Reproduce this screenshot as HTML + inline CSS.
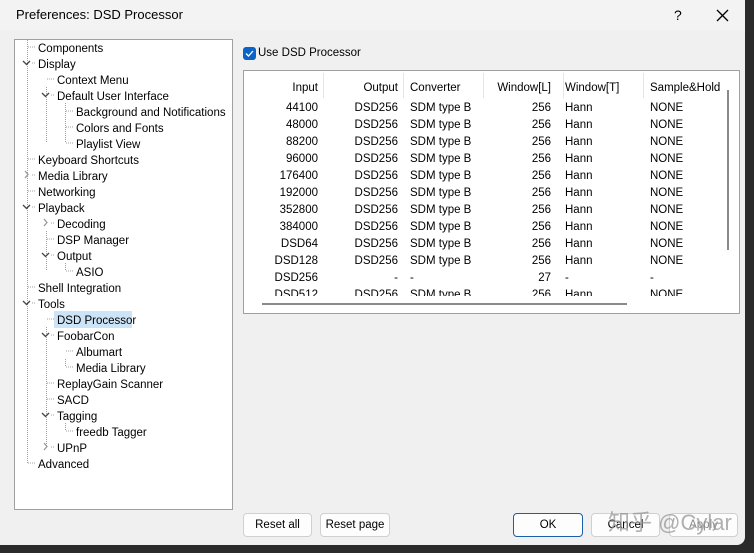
<!DOCTYPE html>
<html><head><meta charset="utf-8"><style>
*{margin:0;padding:0;box-sizing:border-box}
body{width:754px;height:553px;background:#2b2b2b;font-family:"Liberation Sans","Noto Sans CJK SC",sans-serif;font-size:11.5px;color:#000;position:relative;overflow:hidden}
#dlg{position:absolute;left:0;top:0;width:745px;height:545px;background:#f0f0f0;border-radius:0 0 8px 0}
#title{position:absolute;left:0;top:0;width:745px;height:30px;background:#f3f3f3}
.a{position:absolute;white-space:nowrap}
#tree{position:absolute;left:14px;top:39px;width:219px;height:471px;background:#fff;border:1px solid #a0a0a0}
#list{position:absolute;left:243px;top:70px;width:497px;height:244px;background:#fff;border:1px solid #a0a0a0}
.btn{position:absolute;top:513px;height:24px;background:#fdfdfd;border:1px solid #d0d0d0;border-radius:4px;text-align:center;line-height:22px;font-size:11.5px}
.r{text-align:right}
td{padding:0;height:17px}
.p{padding-left:12px}
</style></head><body>
<div id="dlg">
<div id="title"></div>
<div class="a" style="left:16px;top:7px;font-size:13px">Preferences: DSD Processor</div>
<div class="a" style="left:674px;top:7px;font-size:14px">?</div>
<svg class="a" style="left:716px;top:9px" width="13" height="13"><path d="M1 1L12 12M12 1L1 12" stroke="#000" stroke-width="1.3"/></svg>

<div id="tree"></div>
<svg class="a" style="left:0;top:0" width="240" height="480">
<g stroke="#a0a0a0" stroke-dasharray="1 1" fill="none">
<path d="M27.5 40V463M46.5 87V143M46.5 231V271M46.5 327V447M65.5 103V143M65.5 263V271M65.5 359V367M65.5 423V431"/>
<path d="M28 47h8M28 159h8M28 191h8M28 287h8M28 463h8M47 79h8M47 239h8M47 319h8M47 383h8M47 399h8M66 111h8M66 127h8M66 143h8M66 271h8M66 367h8M66 431h8"/>
<path d="M32 63h4M51 95h4M32 175h4M32 207h4M51 223h4M51 255h4M32 303h4M51 335h4M51 415h4M51 447h4M66 351h8"/>
</g>
<g stroke="#444" stroke-width="1.3" fill="none">
<path d="M23 61l3.5 3.5L30 61M42 93l3.5 3.5L49 93M23 205l3.5 3.5L30 205M42 253l3.5 3.5L49 253M23 301l3.5 3.5L30 301M42 333l3.5 3.5L49 333M42 413l3.5 3.5L49 413"/>
</g>
<g stroke="#999" stroke-width="1.3" fill="none"><path d="M25 171l3 3.5-3 3.5M44 219l3 3.5-3 3.5M44 443l3 3.5-3 3.5"/></g>
</svg>
<div class="a" style="left:54px;top:311px;width:78px;height:17px;background:#cce4f7"></div>
<div class="a" style="left:0;top:41px;line-height:16px">
<div style="padding-left:38px">Components</div>
<div style="padding-left:38px">Display</div>
<div style="padding-left:57px">Context Menu</div>
<div style="padding-left:57px">Default User Interface</div>
<div style="padding-left:76px">Background and Notifications</div>
<div style="padding-left:76px">Colors and Fonts</div>
<div style="padding-left:76px">Playlist View</div>
<div style="padding-left:38px">Keyboard Shortcuts</div>
<div style="padding-left:38px">Media Library</div>
<div style="padding-left:38px">Networking</div>
<div style="padding-left:38px">Playback</div>
<div style="padding-left:57px">Decoding</div>
<div style="padding-left:57px">DSP Manager</div>
<div style="padding-left:57px">Output</div>
<div style="padding-left:76px">ASIO</div>
<div style="padding-left:38px">Shell Integration</div>
<div style="padding-left:38px">Tools</div>
<div style="padding-left:57px">DSD Processor</div>
<div style="padding-left:57px">FoobarCon</div>
<div style="padding-left:76px">Albumart</div>
<div style="padding-left:76px">Media Library</div>
<div style="padding-left:57px">ReplayGain Scanner</div>
<div style="padding-left:57px">SACD</div>
<div style="padding-left:57px">Tagging</div>
<div style="padding-left:76px">freedb Tagger</div>
<div style="padding-left:57px">UPnP</div>
<div style="padding-left:38px">Advanced</div>
</div>

<div class="a" style="left:243px;top:47px;width:13px;height:13px;background:#0a64c8;border-radius:3px"></div>
<svg class="a" style="left:243px;top:47px" width="13" height="13"><path d="M3 6.5l2.5 2.5L10 4" stroke="#fff" stroke-width="1.3" fill="none"/></svg>
<div class="a" style="left:258px;top:47px">Use DSD Processor</div>

<div id="list"></div>
<svg class="a" style="left:243px;top:70px" width="497" height="244">
<g stroke="#e5e5e5"><path d="M80.5 3V28M160.5 3V28M240.5 3V28M320.5 3V28M400.5 3V28"/></g>
<rect x="484" y="20" width="2" height="160" fill="#8a8a8a"/>
</svg>
<div class="a" style="left:243px;top:77px;width:480px;height:219px;overflow:hidden">
<table style="border-collapse:collapse;font-size:11.5px">
<tr><td class="r" style="width:75px;height:22px">Input</td><td class="r" style="width:80px">Output</td><td class="p" style="width:80px">Converter</td><td class="r" style="width:73px">Window[L]</td><td class="p" style="width:87px;padding-left:14px">Window[T]</td><td class="p">Sample&amp;Hold</td></tr>
<tr><td class="r">44100</td><td class="r">DSD256</td><td class="p">SDM type B</td><td class="r">256</td><td class="p" style="padding-left:14px">Hann</td><td class="p">NONE</td></tr>
<tr><td class="r">48000</td><td class="r">DSD256</td><td class="p">SDM type B</td><td class="r">256</td><td class="p" style="padding-left:14px">Hann</td><td class="p">NONE</td></tr>
<tr><td class="r">88200</td><td class="r">DSD256</td><td class="p">SDM type B</td><td class="r">256</td><td class="p" style="padding-left:14px">Hann</td><td class="p">NONE</td></tr>
<tr><td class="r">96000</td><td class="r">DSD256</td><td class="p">SDM type B</td><td class="r">256</td><td class="p" style="padding-left:14px">Hann</td><td class="p">NONE</td></tr>
<tr><td class="r">176400</td><td class="r">DSD256</td><td class="p">SDM type B</td><td class="r">256</td><td class="p" style="padding-left:14px">Hann</td><td class="p">NONE</td></tr>
<tr><td class="r">192000</td><td class="r">DSD256</td><td class="p">SDM type B</td><td class="r">256</td><td class="p" style="padding-left:14px">Hann</td><td class="p">NONE</td></tr>
<tr><td class="r">352800</td><td class="r">DSD256</td><td class="p">SDM type B</td><td class="r">256</td><td class="p" style="padding-left:14px">Hann</td><td class="p">NONE</td></tr>
<tr><td class="r">384000</td><td class="r">DSD256</td><td class="p">SDM type B</td><td class="r">256</td><td class="p" style="padding-left:14px">Hann</td><td class="p">NONE</td></tr>
<tr><td class="r">DSD64</td><td class="r">DSD256</td><td class="p">SDM type B</td><td class="r">256</td><td class="p" style="padding-left:14px">Hann</td><td class="p">NONE</td></tr>
<tr><td class="r">DSD128</td><td class="r">DSD256</td><td class="p">SDM type B</td><td class="r">256</td><td class="p" style="padding-left:14px">Hann</td><td class="p">NONE</td></tr>
<tr><td class="r">DSD256</td><td class="r">-</td><td class="p">-</td><td class="r">27</td><td class="p" style="padding-left:14px">-</td><td class="p">-</td></tr>
<tr><td class="r">DSD512</td><td class="r">DSD256</td><td class="p">SDM type B</td><td class="r">256</td><td class="p" style="padding-left:14px">Hann</td><td class="p">NONE</td></tr>
</table></div>
<div class="a" style="left:262px;top:303px;width:365px;height:2px;background:#8a8a8a"></div>

<div class="btn" style="left:243px;width:69px">Reset all</div>
<div class="btn" style="left:320px;width:70px">Reset page</div>
<div class="btn" style="left:513px;width:70px;border-color:#1a5fa8">OK</div>
<div class="btn" style="left:591px;width:69px">Cancel</div>
<div class="btn" style="left:669px;width:69px;color:#888">Apply</div>
<div class="a" style="left:608px;top:505px;font-size:22px;color:rgba(150,150,150,0.75)">知乎 @Cylar</div>
</div>
</body></html>
